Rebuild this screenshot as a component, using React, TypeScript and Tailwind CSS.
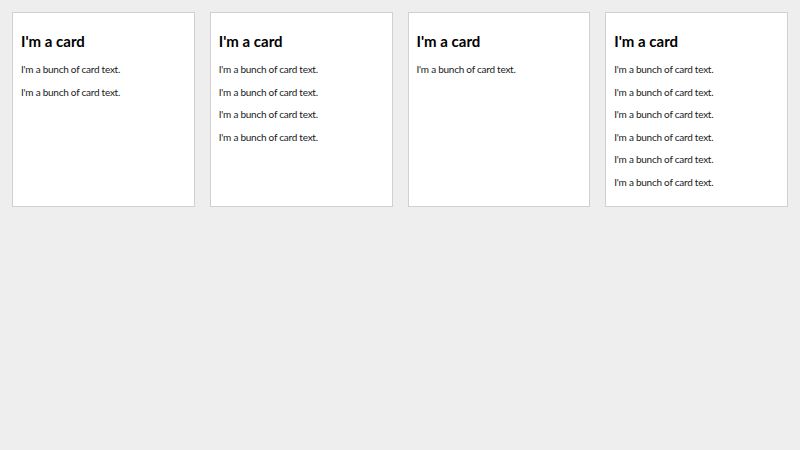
const cards = [2, 4, 1, 6];

function Card({ lines }: { lines: number }) {
  return (
    <div className="flex-1 border border-[#d0d0d0] bg-white px-2 pt-[16px] pb-[13px]">
      <h2 className="text-[15px] font-bold leading-[24px] text-black mb-[5px]">I'm a card</h2>
      {Array.from({ length: lines }).map((_, i) => (
        <p key={i} className="text-[10px] tracking-[-0.25px] leading-[22.5px] text-[#1a1a1a]">
          I'm a bunch of card text.
        </p>
      ))}
    </div>
  );
}

export default function App() {
  return (
    <div
      className="w-[800px] h-[450px] bg-[#eeeeee] p-3"
      style={{ fontFamily: "Lato, 'Open Sans', sans-serif" }}
    >
      <div className="flex items-stretch gap-[15px]">
        {cards.map((n, i) => (
          <Card key={i} lines={n} />
        ))}
      </div>
    </div>
  );
}
